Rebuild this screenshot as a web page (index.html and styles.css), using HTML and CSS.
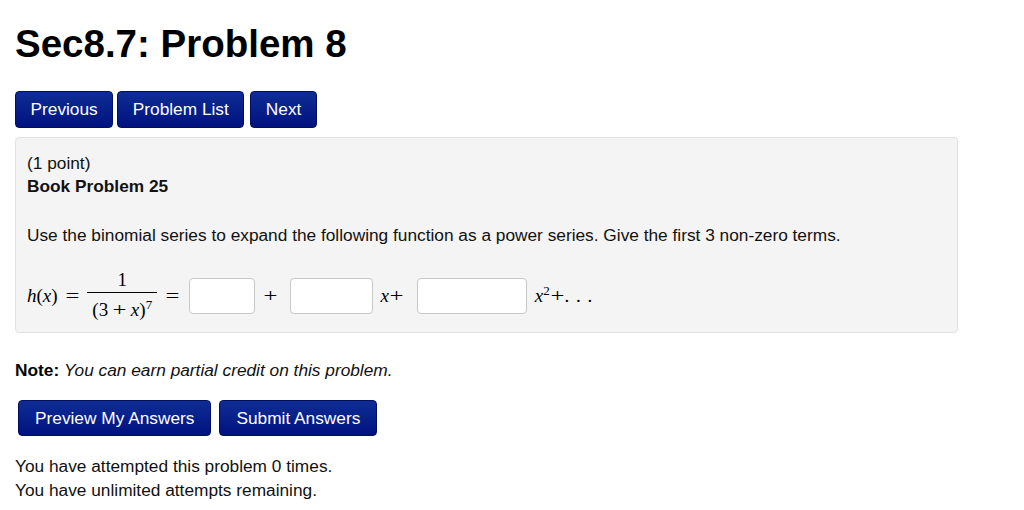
FILE: index.html
```html
<!DOCTYPE html>
<html>
<head>
<meta charset="utf-8">
<link rel="stylesheet" href="styles.css">
</head>
<body>
<h1 class="title">Sec8.7: Problem 8</h1>
<div class="nav">
  <button class="btn">Previous</button>
  <button class="btn">Problem List</button>
  <button class="btn">Next</button>
</div>
<div class="problem">
  <div class="line">(1 point)</div>
  <div class="line bold">Book Problem 25</div>
  <div class="spacer"></div>
  <div class="line">Use the binomial series to expand the following function as a power series. Give the first 3 non-zero terms.</div>
  <div class="eq">
    <span class="math"><i>h</i>(<i>x</i>)</span>
    <span class="op eq1">=</span>
    <span class="frac">
      <span class="num">1</span>
      <span class="den">(3<span class="op sm">+</span><i>x</i>)<sup>7</sup></span>
    </span>
    <span class="op eq2">=</span>
    <span class="ans w1"></span>
    <span class="op p1">+</span>
    <span class="ans w2"></span>
    <span class="math t2"><i>x</i><span class="op">+</span></span>
    <span class="ans w3"></span>
    <span class="math t3"><i>x</i><sup>2</sup><span class="op">+</span><span class="dots">. . .</span></span>
  </div>
</div>
<p class="note"><b>Note:</b> <i>You can earn partial credit on this problem.</i></p>
<div class="submit">
  <button class="btn big">Preview My Answers</button>
  <button class="btn big">Submit Answers</button>
</div>
<div class="info">
  <div>You have attempted this problem 0 times.</div>
  <div>You have unlimited attempts remaining.</div>
</div>
</body>
</html>
```
FILE: styles.css
```css
html, body { margin: 0; padding: 0; background: #fff; }
body {
  font-family: "Liberation Sans", Arial, Helvetica, sans-serif;
  font-size: 17.3px;
  color: #111;
  padding: 0 15px;
}
.title {
  font-size: 38.5px;
  font-weight: bold;
  margin: 0;
  padding-top: 22px;
  line-height: 44px;
  color: #000;
}
.nav {
  display: flex;
  gap: 4px;
  margin-top: 25px;
}
.nav .btn:last-child { margin-left: 2px; }
.btn {
  font-family: "Liberation Sans", Arial, Helvetica, sans-serif;
  font-size: 17.3px;
  color: #fff;
  background: linear-gradient(#0f2d95, #00127f);
  border: 1px solid #00105e;
  border-radius: 4px;
  height: 37px;
  padding: 0 14.5px;
  cursor: pointer;
}
.problem {
  margin-top: 9px;
  background: #f4f4f4;
  border: 1px solid #e1e1e1;
  border-radius: 4px;
  padding: 14px 11px 12px;
  width: 919px;
}
.line { line-height: 23px; }
.spacer { height: 26px; }
.bold { font-weight: bold; }
.eq {
  display: flex;
  align-items: center;
  margin-top: 24px;
  font-family: "Liberation Serif", "Times New Roman", serif;
  font-size: 19px;
  color: #000;
}
.math { white-space: nowrap; }
.op { display: inline-block; transform: scaleX(1.3); }
.eq1 { margin-left: 9px; }
.sm { margin: 0 6px; }
.math sup, .den sup { font-size: 13px; vertical-align: 7px; line-height: 0; }
.frac {
  display: inline-flex;
  flex-direction: column;
  align-items: center;
  margin: 0 0 0 12px;
}
.num {
  padding: 0 2px 3px;
  border-bottom: 1px solid #000;
  width: 100%;
  text-align: center;
  line-height: 18px;
}
.den { padding: 7px 3px 0; line-height: 20px; }
.eq2 { margin-left: 12px; }
.ans {
  display: inline-block;
  height: 34px;
  background: #fff;
  border: 1px solid #c8c8c8;
  border-radius: 4px;
}
.w1 { width: 64px; margin-left: 11px; }
.p1 { margin-left: 10px; }
.w2 { width: 81px; margin-left: 14px; }
.t2 { margin-left: 8px; }
.w3 { width: 108px; margin-left: 15px; }
.t3 { margin-left: 8px; }
.t2 .op, .t3 .op { margin-left: 2px; }
.dots { letter-spacing: 1px; margin-left: 2px; }
.note {
  margin: 25px 0 0;
  line-height: 24px;
}
.note b { color: #000; }
.submit {
  display: flex;
  gap: 8px;
  margin-top: 18px;
  padding-left: 3px;
}
.big { height: 36px; padding: 0 16px; }
.info {
  margin-top: 18px;
  line-height: 24px;
}
```
